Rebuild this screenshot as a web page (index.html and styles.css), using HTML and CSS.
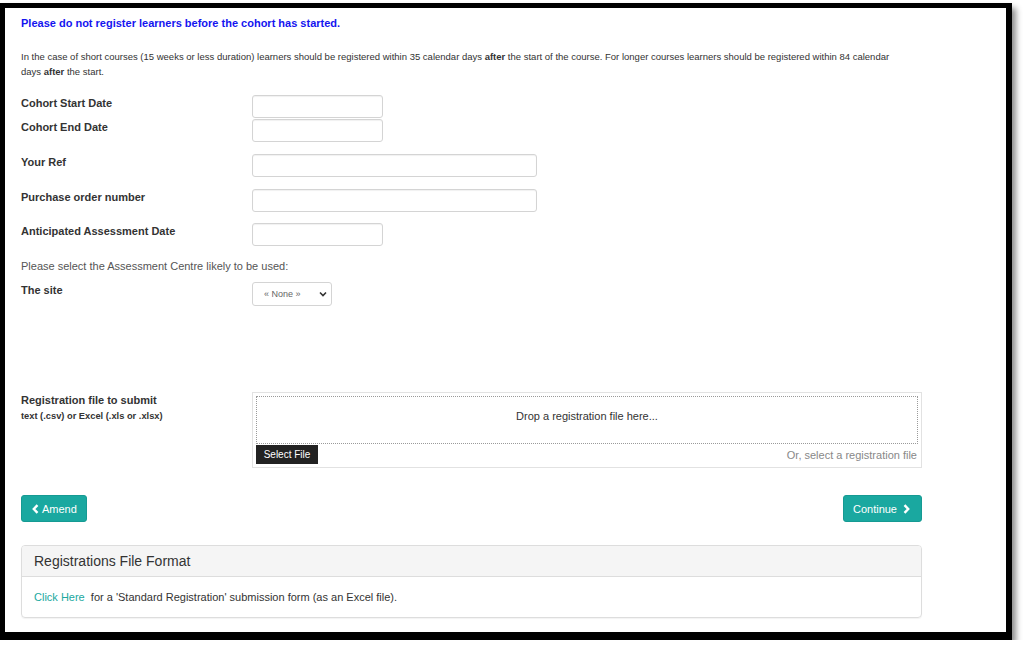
FILE: index.html
```html
<!DOCTYPE html>
<html lang="en">
<head>
<meta charset="utf-8">
<title>Cohort registration</title>
<link rel="stylesheet" href="styles.css">
</head>
<body>
<div class="frame">
  <div class="content">
    <p class="warning">Please do not register learners before the cohort has started.</p>
    <p class="intro">In the case of short courses (15 weeks or less duration) learners should be registered within 35 calendar days <b>after</b> the start of the course. For longer courses learners should be registered within 84 calendar days <b>after</b> the start.</p>

    <div class="row row-tight">
      <label class="label">Cohort Start Date</label>
      <input class="input input-short" type="text">
    </div>
    <div class="row row-end">
      <label class="label">Cohort End Date</label>
      <input class="input input-short" type="text">
    </div>
    <div class="row row-ref">
      <label class="label">Your Ref</label>
      <input class="input input-long" type="text">
    </div>
    <div class="row row-po">
      <label class="label">Purchase order number</label>
      <input class="input input-long" type="text">
    </div>
    <div class="row">
      <label class="label">Anticipated Assessment Date</label>
      <input class="input input-short" type="text">
    </div>

    <p class="note">Please select the Assessment Centre likely to be used:</p>

    <div class="row row-site">
      <label class="label">The site</label>
      <span class="select-wrap">
        <select class="select"><option>« None »</option></select>
        <svg class="select-arrow" width="8" height="6" viewBox="0 0 8 6"><path d="M1 1.5 L4 4.5 L7 1.5" fill="none" stroke="#333" stroke-width="1.6"/></svg>
      </span>
    </div>

    <div class="row row-file">
      <div class="label-block">
        <div class="label">Registration file to submit</div>
        <div class="sublabel">text (.csv) or Excel (.xls or .xlsx)</div>
      </div>
      <div class="upload">
        <div class="dropzone">Drop a registration file here...</div>
        <div class="upload-foot">
          <button class="select-file" type="button">Select File</button>
          <span class="or-text">Or, select a registration file</span>
        </div>
      </div>
    </div>

    <div class="actions">
      <button class="btn" type="button">
        <svg class="chev" width="7" height="10" viewBox="0 0 7 10"><path d="M5.5 1.2 L1.8 5 L5.5 8.8" fill="none" stroke="#fff" stroke-width="2.4"/></svg>
        <span>Amend</span>
      </button>
      <button class="btn btn-continue" type="button">
        <span>Continue</span>
        <svg class="chev" width="7" height="10" viewBox="0 0 7 10"><path d="M1.5 1.2 L5.2 5 L1.5 8.8" fill="none" stroke="#fff" stroke-width="2.4"/></svg>
      </button>
    </div>

    <div class="panel">
      <div class="panel-heading">Registrations File Format</div>
      <div class="panel-body"><a class="link" href="#">Click Here</a>&nbsp; for a 'Standard Registration' submission form (as an Excel file).</div>
    </div>
  </div>
</div>
</body>
</html>
```

FILE: styles.css
```css
html, body {
  margin: 0;
  padding: 0;
  background: #fff;
}

body {
  font-family: "Liberation Sans", Arial, sans-serif;
  color: #333;
}

.frame {
  box-sizing: border-box;
  margin-top: 3px;
  width: 1012px;
  height: 637px;
  border-style: solid;
  border-color: #000;
  border-width: 5px 6px 8px 5px;
  background: #fff;
  box-shadow: 4px 5px 6px rgba(0, 0, 0, 0.45);
}

.content {
  width: 901px;
  padding: 7px 0 0 16px;
}

.warning {
  margin: 0;
  font-size: 11px;
  line-height: 16px;
  font-weight: bold;
  color: #1414f0;
}

.intro {
  max-width: 880px;
  margin: 18px 0 0;
  font-size: 9.5px;
  line-height: 15px;
  color: #333;
}

.intro b {
  font-weight: bold;
}

.row {
  display: flex;
  align-items: flex-start;
}

.row-tight {
  margin-top: 16px;
  margin-bottom: 1px;
}

.row-end {
  margin-bottom: 12px;
}

.row-ref {
  margin-bottom: 12px;
}

.row-po {
  margin-bottom: 11px;
}

.label {
  display: block;
  width: 231px;
  flex: none;
  font-size: 11px;
  line-height: 16px;
  font-weight: bold;
  color: #333;
}

.label-block {
  width: 231px;
  flex: none;
}

.sublabel {
  font-size: 9.3px;
  line-height: 16px;
  font-weight: bold;
  color: #333;
}

.input {
  box-sizing: border-box;
  height: 23px;
  margin: 0;
  border: 1px solid #d4d4d4;
  border-radius: 3px;
  background: #fff;
  box-shadow: inset 0 1px 1px rgba(0, 0, 0, 0.06);
  font-family: inherit;
}

.input-short {
  width: 131px;
}

.input-long {
  width: 285px;
}

.note {
  margin: 12px 0 0;
  font-size: 11px;
  line-height: 16px;
  color: #555;
}

.row-site {
  margin-top: 8px;
}

.select-wrap {
  position: relative;
  display: inline-block;
}

.select {
  box-sizing: border-box;
  width: 80px;
  height: 24px;
  margin: 0;
  padding: 0 0 0 11px;
  border: 1px solid #d4d4d4;
  border-radius: 3px;
  background: #fff;
  -webkit-appearance: none;
  appearance: none;
  font-family: inherit;
  font-size: 9px;
  color: #666;
}

.select-arrow {
  position: absolute;
  right: 5px;
  top: 9px;
}

.row-file {
  margin-top: 86px;
}

.upload {
  box-sizing: border-box;
  width: 671px;
  height: 76px;
  padding: 3px;
  border: 1px solid #e2e2e2;
}

.dropzone {
  box-sizing: border-box;
  height: 48px;
  padding-top: 11px;
  border: 1px dotted #9a9a9a;
  text-align: center;
  font-size: 11px;
  line-height: 16px;
  color: #333;
}

.upload-foot {
  display: flex;
  justify-content: space-between;
  align-items: center;
  margin-top: 1px;
}

.select-file {
  box-sizing: border-box;
  height: 19px;
  width: 62px;
  padding: 0;
  border: none;
  background: #222;
  color: #fff;
  font-family: inherit;
  font-size: 10px;
}

.or-text {
  font-size: 11px;
  line-height: 14px;
  color: #888;
  padding-right: 1px;
}

.actions {
  display: flex;
  justify-content: space-between;
  margin-top: 27px;
}

.btn {
  box-sizing: border-box;
  height: 27px;
  display: inline-flex;
  align-items: center;
  gap: 3px;
  padding: 0 9px 0 10px;
  border: 1px solid #169a93;
  border-radius: 3px;
  background: #1aa8a0;
  color: #fff;
  font-family: inherit;
  font-size: 11px;
}

.btn-continue {
  gap: 6px;
  padding: 0 11px 0 9px;
}

.chev {
  display: block;
}

.panel {
  margin-top: 23px;
  border: 1px solid #ddd;
  border-radius: 4px;
  box-shadow: 0 1px 1px rgba(0, 0, 0, 0.05);
}

.panel-heading {
  height: 30px;
  padding: 0 12px;
  display: flex;
  align-items: center;
  background: #f5f5f5;
  border-bottom: 1px solid #ddd;
  border-radius: 3px 3px 0 0;
  font-size: 14px;
  color: #333;
}

.panel-body {
  padding: 12px;
  font-size: 11px;
  line-height: 16px;
  color: #333;
}

.link {
  color: #1aa8a0;
  text-decoration: none;
}
```
